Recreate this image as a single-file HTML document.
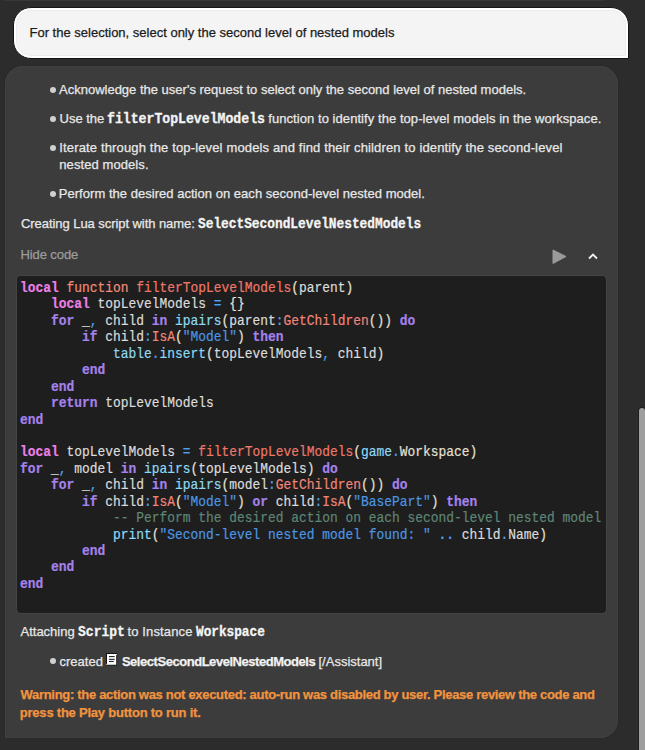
<!DOCTYPE html>
<html><head><meta charset="utf-8">
<style>
html,body{margin:0;padding:0;}
body{width:645px;height:750px;overflow:hidden;background:#2c2c2c;position:relative;font-family:"Liberation Sans",sans-serif;font-size:13px;color:#e8e8e8;}
.a{position:absolute;white-space:pre;line-height:17px;-webkit-text-stroke:0.25px currentColor;}
.m{position:absolute;white-space:pre;line-height:17px;font-family:"Liberation Mono",monospace;font-weight:bold;font-size:14px;color:#f4f4f4;transform-origin:0 0;-webkit-text-stroke:0.3px currentColor;}
#prev{position:absolute;left:5px;top:-17px;width:613px;height:18px;background:#383838;border-radius:0 0 18px 0;}
#user{position:absolute;left:13px;top:7px;width:614px;height:50px;background:#f4f4f4;border:1px solid #151515;border-radius:18px 18px 0 18px;box-shadow:inset 0 0 0 2px #fff,inset 0 0 0 3px #ececec;}
#asst{position:absolute;left:5px;top:66px;width:613px;height:672px;background:#3c3c3c;border-radius:18px 18px 18px 0;box-shadow:0 0 0 1px #292929,inset 0 0 0 1px #414141;}
.dot{position:absolute;width:6px;height:6px;border-radius:50%;background:#d0d0d0;}
#code{position:absolute;left:16.5px;top:276px;width:589.5px;height:337px;background:#1e1e1e;border-radius:4px;box-shadow:0 0 0 1px #444;}
#pre{position:absolute;left:20px;top:280px;margin:0;font-family:"Liberation Mono",monospace;font-size:14.8px;line-height:16.44px;color:#dcdcdc;white-space:pre;-webkit-text-stroke:0.2px currentColor;transform:scaleX(0.8727);transform-origin:0 0;}
.k{color:#a682ec;font-weight:bold;}
.lo{color:#ec80e6;font-weight:bold;}
.fn{color:#f58c78;}
.fd{color:#ee7868;}
.op{color:#4ea2ec;}
.bi{color:#8edaf4;}
.me{color:#f0867a;}
.st{color:#4c96e2;}
.cm{color:#5f8676;}
.pu{color:#e6e0d4;}
.warn{color:#f2933e;font-weight:bold;}
#thumb{position:absolute;left:639px;top:408px;width:6px;height:345px;background:#9e9e9e;border-radius:3px;box-shadow:0 0 0 1px #1f1f1f;}
</style></head>
<body>
<div id="prev"></div>
<div id="user"></div>
<div class="a" style="left:29.5px;top:24px;color:#1b1b1b">For the selection, select only the second level of nested models</div>
<div id="asst"></div>

<div class="dot" style="left:50px;top:87px"></div>
<div class="a" style="left:59px;top:81px">Acknowledge the user's request to select only the second level of nested models.</div>

<div class="dot" style="left:50px;top:116px"></div>
<div class="a" style="left:59.5px;top:110px">Use the</div>
<div class="m" style="left:106.7px;top:111px;transform:scaleX(0.94)">filterTopLevelModels</div>
<div class="a" style="left:268.3px;top:110px;letter-spacing:0.06px">function to identify the top-level models in the workspace.</div>

<div class="dot" style="left:50px;top:145px"></div>
<div class="a" style="left:59.3px;top:139px;letter-spacing:0.15px">Iterate through the top-level models and find their children to identify the second-level</div>
<div class="a" style="left:59.3px;top:156px;letter-spacing:0.08px">nested models.</div>

<div class="dot" style="left:50px;top:191px"></div>
<div class="a" style="left:58.8px;top:185px;letter-spacing:0.03px">Perform the desired action on each second-level nested model.</div>

<div class="a" style="left:21px;top:215px;letter-spacing:-0.06px">Creating Lua script with name:</div>
<div class="m" style="left:198.2px;top:216px;transform:scaleX(0.916)">SelectSecondLevelNestedModels</div>
<div class="a" style="left:20.5px;top:246px;color:#9c9c9c;letter-spacing:-0.1px">Hide code</div>

<svg style="position:absolute;left:550px;top:246px" width="20" height="20" viewBox="0 0 20 20"><path d="M3 4 L16 10.5 L3 17.5 Z" fill="#9a9a9a" stroke="#9a9a9a" stroke-width="1" stroke-linejoin="round"/></svg>
<svg style="position:absolute;left:585px;top:250px" width="16" height="12" viewBox="0 0 16 12"><path d="M4 8.5 L8 4.5 L12 8.5" fill="none" stroke="#f0f0f0" stroke-width="1.8"/></svg>

<div id="code"></div>
<pre id="pre"><span class="lo">local</span> <span class="fn">function</span> <span class="fd">filterTopLevelModels</span><span class="pu">(</span>parent<span class="pu">)</span>
    <span class="lo">local</span> topLevelModels <span class="op">=</span> <span class="pu">{}</span>
    <span class="k">for</span> <span class="pu">_</span><span class="op">,</span> child <span class="k">in</span> <span class="bi">ipairs</span><span class="pu">(</span>parent<span class="op">:</span><span class="me">GetChildren</span><span class="pu">())</span> <span class="k">do</span>
        <span class="k">if</span> child<span class="op">:</span><span class="me">IsA</span><span class="pu">(</span><span class="st">"Model"</span><span class="pu">)</span> <span class="k">then</span>
            <span class="bi">table</span><span class="op">.</span><span class="bi">insert</span><span class="pu">(</span>topLevelModels<span class="op">,</span> child<span class="pu">)</span>
        <span class="k">end</span>
    <span class="k">end</span>
    <span class="k">return</span> topLevelModels
<span class="k">end</span>

<span class="lo">local</span> topLevelModels <span class="op">=</span> <span class="fd">filterTopLevelModels</span><span class="pu">(</span><span class="bi">game</span><span class="op">.</span><span class="pu">Workspace</span><span class="pu">)</span>
<span class="k">for</span> <span class="pu">_</span><span class="op">,</span> model <span class="k">in</span> <span class="bi">ipairs</span><span class="pu">(</span>topLevelModels<span class="pu">)</span> <span class="k">do</span>
    <span class="k">for</span> <span class="pu">_</span><span class="op">,</span> child <span class="k">in</span> <span class="bi">ipairs</span><span class="pu">(</span>model<span class="op">:</span><span class="me">GetChildren</span><span class="pu">())</span> <span class="k">do</span>
        <span class="k">if</span> child<span class="op">:</span><span class="me">IsA</span><span class="pu">(</span><span class="st">"Model"</span><span class="pu">)</span> <span class="k">or</span> child<span class="op">:</span><span class="me">IsA</span><span class="pu">(</span><span class="st">"BasePart"</span><span class="pu">)</span> <span class="k">then</span>
            <span class="cm">-- Perform the desired action on each second-level nested model</span>
            <span class="bi">print</span><span class="pu">(</span><span class="st">"Second-level nested model found: "</span> <span class="op" style="font-weight:bold">..</span> child<span class="op">.</span>Name<span class="pu">)</span>
        <span class="k">end</span>
    <span class="k">end</span>
<span class="k">end</span></pre>

<div class="a" style="left:20.5px;top:623px">Attaching</div>
<div class="m" style="left:78.2px;top:624px;transform:scaleX(0.93)">Script</div>
<div class="a" style="left:127.4px;top:623px;letter-spacing:0.15px">to Instance</div>
<div class="m" style="left:195.7px;top:624px;transform:scaleX(0.91)">Workspace</div>

<div class="dot" style="left:50px;top:658px"></div>
<div class="a" style="left:59.5px;top:653px">created</div>
<svg style="position:absolute;left:103px;top:650px" width="18" height="18" viewBox="0 0 18 18"><path d="M3 3 H14.2 V4.8 L14 15.6 H2.6 L3 13.8 Z" fill="#141414"/><path d="M4 4 H14.2 L13.2 5.2 V14.8 H2.8 L4 13.6 Z" fill="#fbfbfb"/><path d="M6 6.6 H11.7 M6 9.3 H11.7 M6 11.4 H10.8" stroke="#141414" stroke-width="1"/></svg>
<div class="a" style="left:121.9px;top:653px;font-weight:bold;letter-spacing:-0.46px;color:#f2f2f2">SelectSecondLevelNestedModels</div>
<div class="a" style="left:318.5px;top:653px">[/Assistant]</div>

<div class="a warn" style="left:20.6px;top:686px;letter-spacing:-0.31px">Warning: the action was not executed: auto-run was disabled by user. Please review the code and</div>
<div class="a warn" style="left:19.8px;top:704px;letter-spacing:-0.22px">press the Play button to run it.</div>

<div id="thumb"></div>
</body></html>
